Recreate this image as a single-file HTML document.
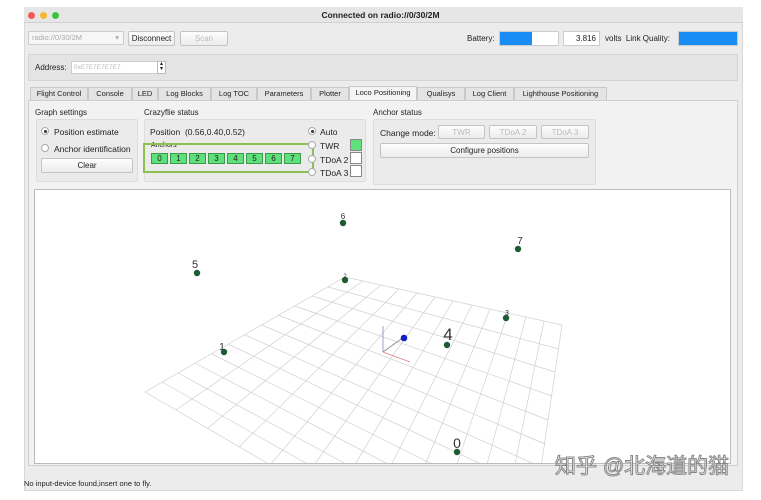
<!DOCTYPE html>
<html><head><meta charset="utf-8"><style>
*{box-sizing:border-box;margin:0;padding:0}
html,body{width:761px;height:500px;overflow:hidden}
body{background:#fff;font-family:"Liberation Sans",sans-serif;font-size:8px;color:#222;position:relative}
.a{position:absolute}
.btn{position:absolute;background:linear-gradient(#fdfdfd,#ececec);border:1px solid #c4c4c4;border-radius:2px;text-align:center;font-size:8px;line-height:13px}
.dis{color:#bbb}
.box{position:absolute;border:1px solid #dcdcdc;background:#ebebeb;border-radius:2px}
.tab{position:absolute;top:87px;height:13px;border:1px solid #c8c8c8;border-bottom:none;background:#e4e4e4;font-size:7.5px;line-height:12px;text-align:center}
.cell{position:absolute;top:153px;width:17px;height:11px;background:#5ee07a;border:1px solid #3a9a4a;text-align:center;font-size:8px;line-height:10px}
.radio{position:absolute;width:8px;height:8px;border:1px solid #aaa;border-radius:50%;background:#fff}
.radio.on::after{content:"";position:absolute;left:1.5px;top:1.5px;width:3px;height:3px;border-radius:50%;background:#333}
</style></head><body>
<div class="a" style="left:24px;top:7px;width:719px;height:484px;background:#ececec;border:1px solid #d8d8d8"></div>
<div class="a" style="left:24px;top:7px;width:719px;height:16px;background:#e6e6e6;border-bottom:1px solid #d0d0d0"></div>
<div class="a" style="left:28px;top:12px;width:7px;height:7px;border-radius:50%;background:#f25a55"></div>
<div class="a" style="left:40px;top:12px;width:7px;height:7px;border-radius:50%;background:#f5b731"></div>
<div class="a" style="left:52px;top:12px;width:7px;height:7px;border-radius:50%;background:#3cc441"></div>
<div class="a" style="left:0;width:761px;top:10px;text-align:center;font-weight:bold;font-size:8.5px">Connected on radio://0/30/2M</div>
<div class="a" style="left:28px;top:31px;width:96px;height:14px;background:#f6f6f6;border:1px solid #ccc;color:#aaa;font-size:7.5px;line-height:12px;padding-left:3px">radio://0/30/2M<span style="position:absolute;right:4px">▾</span></div>
<div class="btn" style="left:128px;top:31px;width:47px;height:15px">Disconnect</div>
<div class="btn dis" style="left:180px;top:31px;width:48px;height:15px">Scan</div>
<div class="a" style="left:467px;top:34px;font-size:8px">Battery:</div>
<div class="a" style="left:499px;top:31px;width:60px;height:15px;background:#fff;border:1px solid #ccc"><div style="width:32px;height:13px;background:#1a8df5"></div></div>
<div class="a" style="left:563px;top:31px;width:37px;height:15px;background:#fff;border:1px solid #ccc;text-align:right;padding-right:3px;line-height:13px">3.816</div>
<div class="a" style="left:605px;top:34px">volts&nbsp; Link Quality:</div>
<div class="a" style="left:678px;top:31px;width:60px;height:15px;background:#1a8df5;border:1px solid #ccc"></div>
<div class="a" style="left:28px;top:54px;width:710px;height:27px;background:#e4e4e4;border:1px solid #d4d4d4"></div>
<div class="a" style="left:35px;top:63px">Address:</div>
<div class="a" style="left:71px;top:61px;width:87px;height:13px;background:#fff;border:1px solid #ccc;color:#bbb;font-size:6.5px;line-height:11px;padding-left:2px">0xE7E7E7E7E7</div>
<div class="a" style="left:157px;top:61px;width:9px;height:13px;background:#fff;border:1px solid #bbb;font-size:6px;line-height:5px;text-align:center">▴<br>▾</div>
<div class="tab" style="left:30px;width:58px">Flight Control</div>
<div class="tab" style="left:88px;width:44px">Console</div>
<div class="tab" style="left:132px;width:26px">LED</div>
<div class="tab" style="left:158px;width:53px">Log Blocks</div>
<div class="tab" style="left:211px;width:46px">Log TOC</div>
<div class="tab" style="left:257px;width:54px">Parameters</div>
<div class="tab" style="left:311px;width:38px">Plotter</div>
<div class="tab" style="left:349px;width:68px;background:#f4f4f4;top:86px;height:15px">Loco Positioning</div>
<div class="tab" style="left:417px;width:48px">Qualisys</div>
<div class="tab" style="left:465px;width:49px">Log Client</div>
<div class="tab" style="left:514px;width:93px">Lighthouse Positioning</div>
<div class="a" style="left:28px;top:100px;width:710px;height:366px;background:#f2f2f2;border:1px solid #cfcfcf"></div>
<div class="a" style="left:35px;top:108px">Graph settings</div>
<div class="box" style="left:36px;top:119px;width:102px;height:63px"></div>
<div class="radio on" style="left:41px;top:127px"></div><div class="a" style="left:54px;top:127px;font-size:8.5px">Position estimate</div>
<div class="radio" style="left:41px;top:144px"></div><div class="a" style="left:54px;top:144px;font-size:8.5px">Anchor identification</div>
<div class="btn" style="left:41px;top:158px;width:92px;height:15px;line-height:14px">Clear</div>
<div class="a" style="left:144px;top:108px">Crazyflie status</div>
<div class="box" style="left:144px;top:119px;width:222px;height:63px"></div>
<div class="a" style="left:150px;top:127px;font-size:8.5px">Position&nbsp; (0.56,0.40,0.52)</div>
<div class="a" style="left:151px;top:142px;font-size:7px">Anchors</div>
<div class="cell" style="left:151px">0</div><div class="cell" style="left:170px">1</div><div class="cell" style="left:189px">2</div><div class="cell" style="left:208px">3</div><div class="cell" style="left:227px">4</div><div class="cell" style="left:246px">5</div><div class="cell" style="left:265px">6</div><div class="cell" style="left:284px">7</div>
<div class="a" style="left:143px;top:143px;width:171px;height:30px;border:2.5px solid #8cc152"></div>
<div class="radio on" style="left:308px;top:127px"></div><div class="a" style="left:320px;top:127px;font-size:8.5px">Auto</div>
<div class="radio" style="left:308px;top:141px"></div><div class="a" style="left:320px;top:141px;font-size:8.5px">TWR</div>
<div class="radio" style="left:308px;top:155px"></div><div class="a" style="left:320px;top:155px;font-size:8.5px">TDoA 2</div>
<div class="radio" style="left:308px;top:168px"></div><div class="a" style="left:320px;top:168px;font-size:8.5px">TDoA 3</div>
<div class="a" style="left:350px;top:139px;width:12px;height:12px;background:#5ee07a;border:1px solid #888"></div>
<div class="a" style="left:350px;top:152px;width:12px;height:12px;background:#fff;border:1px solid #888"></div>
<div class="a" style="left:350px;top:165px;width:12px;height:12px;background:#fff;border:1px solid #888"></div>
<div class="a" style="left:373px;top:108px">Anchor status</div>
<div class="box" style="left:373px;top:119px;width:223px;height:66px"></div>
<div class="a" style="left:380px;top:128px;font-size:8.5px">Change mode:</div>
<div class="btn dis" style="left:438px;top:125px;width:47px;height:14px">TWR</div>
<div class="btn dis" style="left:489px;top:125px;width:48px;height:14px">TDoA 2</div>
<div class="btn dis" style="left:541px;top:125px;width:48px;height:14px">TDoA 3</div>
<div class="btn" style="left:380px;top:143px;width:209px;height:15px">Configure positions</div>
<div class="a" style="left:34px;top:189px;width:697px;height:275px;background:#fff;border:1px solid #bbb;overflow:hidden">
<svg width="697" height="275" viewBox="35 190 697 275" style="position:absolute;left:0;top:0">
<g stroke="#d0d0d0" stroke-width="0.7" fill="none">
<path d="M345 277L145 392M363 281L176 410M381 285L208 428M399 289L239 447M417 293L270 465M435 297L301 483M453 301L333 501M472 305L364 519M490 309L395 537M508 313L426 556M526 317L458 574M544 321L489 592M562 325L520 610"/>
<path d="M345 277L562 325M328 287L559 349M312 296L555 372M295 306L552 396M278 315L548 420M262 325L545 444M245 335L541 467M228 344L538 491M212 354L534 515M195 363L531 539M178 373L527 562M162 382L524 586M145 392L520 610"/>
</g>
<path d="M383 352L383 326" stroke="#8888cc" stroke-width="0.8"/>
<path d="M383 352L410 362" stroke="#e08080" stroke-width="0.8"/>
<path d="M383 352L404 337" stroke="#888" stroke-width="0.8"/>
<g fill="#1e5a32">
<circle cx="343" cy="223" r="3.2"/><circle cx="518" cy="249" r="3.2"/><circle cx="197" cy="273" r="3.2"/><circle cx="345" cy="280" r="3.2"/><circle cx="506" cy="318" r="3.2"/><circle cx="447" cy="345" r="3.2"/><circle cx="224" cy="352" r="3.2"/><circle cx="457" cy="452" r="3.2"/>
</g>
<circle cx="404" cy="338" r="3.3" fill="#1420c8"/>
<g font-family="Liberation Sans,sans-serif" fill="#333" text-anchor="middle">
<text x="343" y="219" font-size="8">6</text><text x="520" y="244" font-size="10">7</text><text x="195" y="268" font-size="11">5</text><text x="345" y="278" font-size="6">2</text><text x="507" y="315" font-size="7">3</text><text x="448" y="340" font-size="17">4</text><text x="222" y="350" font-size="10">1</text><text x="457" y="448" font-size="14">0</text>
</g></svg></div>
<div class="a" style="left:24px;top:479px;font-size:7.5px">No input-device found,insert one to fly.</div>
<div class="a" style="left:555px;top:454px;font-family:'Liberation Sans','Noto Sans CJK SC',sans-serif;font-size:21px;line-height:26px;color:#fff;-webkit-text-stroke:1px #888;white-space:nowrap">知乎 @北海道的猫</div>
</body></html>
